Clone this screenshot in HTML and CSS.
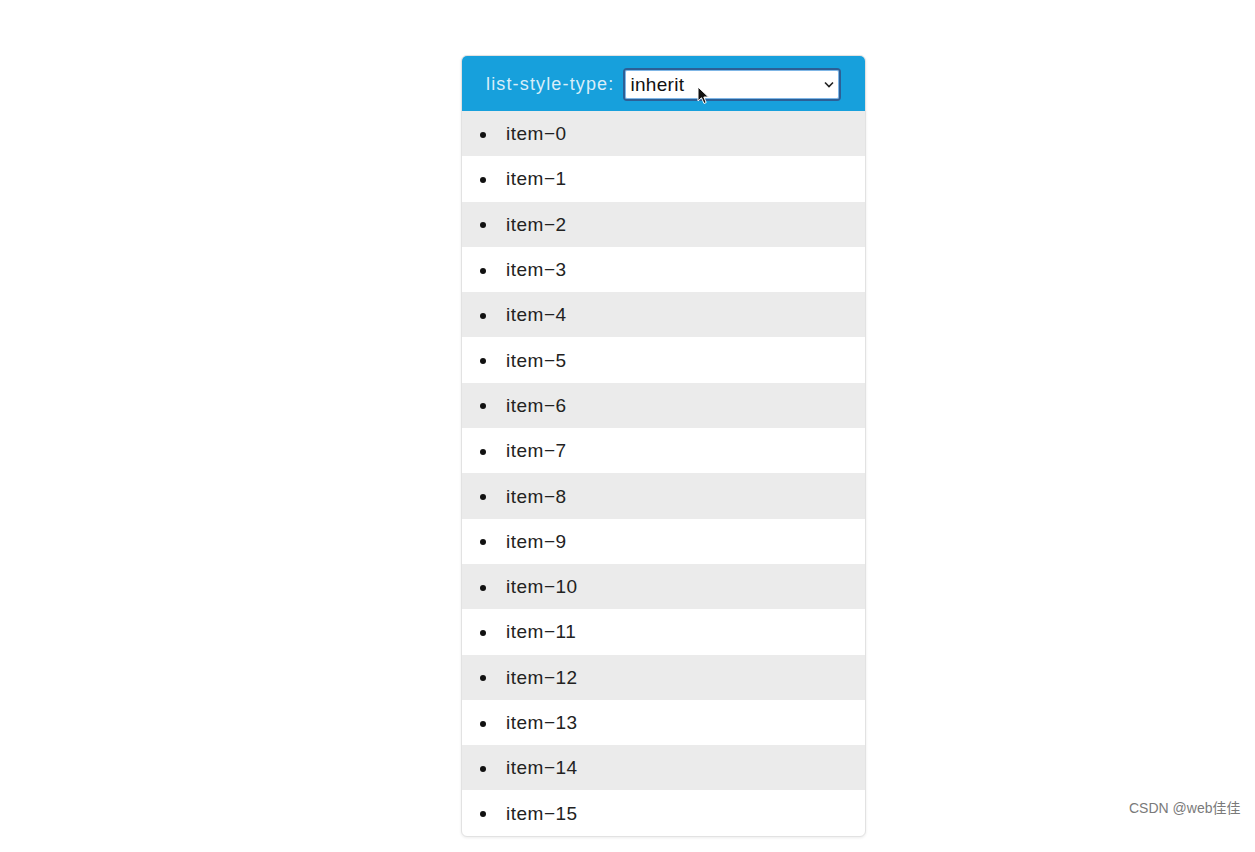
FILE: index.html
```html
<!DOCTYPE html>
<html lang="en">
<head>
<meta charset="utf-8">
<title>list-style-type</title>
<link rel="stylesheet" href="styles.css">
</head>
<body>
<div class="page">
  <div class="card">
    <div class="header">
      <label class="label" for="lst">list-style-type:</label>
      <div class="select-wrap">
        <select id="lst" class="select">
          <option>inherit</option>
          <option>disc</option>
          <option>circle</option>
          <option>square</option>
          <option>decimal</option>
          <option>none</option>
        </select>
        <svg class="chevron" width="10" height="7" viewBox="0 0 10 7"><path d="M1 1.5 L5 5.5 L9 1.5" fill="none" stroke="#222" stroke-width="1.6"/></svg>
        <svg class="cursor" width="14" height="20" viewBox="0 0 14 20"><path d="M1 1 L1 15 L4.5 11.8 L7 17.5 L9.2 16.5 L6.8 11 L11.5 11 Z" fill="#111" stroke="#fff" stroke-width="1"/></svg>
      </div>
    </div>
    <ul class="list">
      <li>item−0</li>
      <li>item−1</li>
      <li>item−2</li>
      <li>item−3</li>
      <li>item−4</li>
      <li>item−5</li>
      <li>item−6</li>
      <li>item−7</li>
      <li>item−8</li>
      <li>item−9</li>
      <li>item−10</li>
      <li>item−11</li>
      <li>item−12</li>
      <li>item−13</li>
      <li>item−14</li>
      <li>item−15</li>
    </ul>
  </div>
  <div class="watermark">CSDN @web佳佳</div>
</div>
</body>
</html>
```
FILE: styles.css
```css
html, body {
  margin: 0;
  padding: 0;
  background: #ffffff;
}
body {
  font-family: "Liberation Sans", "Noto Sans CJK SC", sans-serif;
  color: #222222;
}
.page {
  position: relative;
  width: 1255px;
  height: 852px;
  padding: 55px 0 0 461px;
  box-sizing: border-box;
}
.card {
  width: 403px;
  border: 1px solid #e2e2e2;
  border-radius: 6px;
  overflow: hidden;
  box-shadow: 0 1px 3px rgba(0,0,0,0.08);
  background: #fff;
}
.header {
  height: 55px;
  background: #17a0dc;
  display: flex;
  align-items: center;
  padding-left: 24px;
  padding-top: 1px;
  box-sizing: border-box;
  gap: 9px;
}
.label {
  color: #d9eef9;
  font-size: 18px;
  letter-spacing: 1.15px;
}
.select-wrap {
  position: relative;
  display: flex;
}
.select {
  appearance: none;
  -webkit-appearance: none;
  width: 218px;
  height: 33px;
  border: 2px solid #2c5f96;
  box-shadow: inset 0 0 0 1px #7fb6e6;
  border-radius: 4px;
  background: #fff;
  font-family: "Liberation Sans", sans-serif;
  font-size: 19px;
  letter-spacing: 0.3px;
  color: #111;
  padding: 0 0 0 5px;
  outline: none;
}
.chevron {
  position: absolute;
  right: 7px;
  top: 13px;
}
.cursor {
  position: absolute;
  left: 74px;
  top: 18px;
}
.list {
  margin: 0;
  padding: 0;
  list-style: none;
}
.list li {
  height: 45.3px;
  display: flex;
  align-items: center;
  gap: 20px;
  padding-left: 18px;
  padding-top: 1px;
  box-sizing: border-box;
  font-size: 19px;
  letter-spacing: 0.5px;
}
.list li::before {
  content: "";
  width: 6px;
  height: 6px;
  border-radius: 50%;
  background: #111;
  flex: none;
  margin-top: 1px;
}
.list li:nth-child(odd) {
  background: #ebebeb;
}
.watermark {
  position: absolute;
  left: 1129px;
  top: 797px;
  font-size: 14px;
  color: #7a7a7a;
}
```
